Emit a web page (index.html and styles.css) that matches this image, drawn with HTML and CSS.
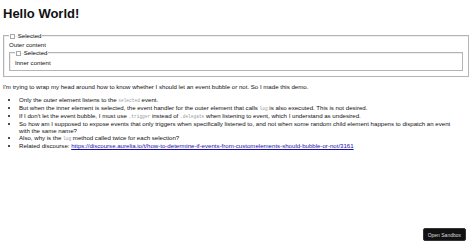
FILE: index.html
```html
<!DOCTYPE html>
<html lang="en">
<head>
    <meta charset="UTF-8">
    <meta name="viewport" content="width=device-width, initial-scale=1.0">
    <title>Hello World!</title>
    <link rel="stylesheet" href="styles.css">
</head>
<body>

    <h1>Hello World!</h1>

    <fieldset class="box">
        <legend><input type="checkbox"> Selected</legend>
        <div class="content">Outer content</div>
        <fieldset class="box inner">
            <legend><input type="checkbox"> Selected</legend>
            <div class="content">Inner content</div>
        </fieldset>
    </fieldset>

    <p>I'm trying to wrap my head around how to know whether I should let an event bubble or not. So I made this demo.</p>

    <ul>
        <li>Only the outer element listens to the <code>selected</code> event.</li>
        <li>But when the inner element is selected, the event handler for the outer element that calls <code>log</code> is also executed. This is not desired.</li>
        <li>If I don't let the event bubble, I must use <code>.trigger</code> instead of <code>.delegate</code> when listening to event, which I understand as undesired.</li>
        <li>So how am I supposed to expose events that only triggers when specifically listened to, and not when some random child element happens to dispatch an event with the same name?</li>
        <li>Also, why is the <code>log</code> method called twice for each selection?</li>
        <li>Related discourse: <a href="https://discourse.aurelia.io/t/how-to-determine-if-events-from-customelements-should-bubble-or-not/3161">https://discourse.aurelia.io/t/how-to-determine-if-events-from-customelements-should-bubble-or-not/3161</a></li>
    </ul>

    <button class="sandbox-btn">Open Sandbox</button>

</body>
</html>
```

FILE: styles.css
```css
body {
    margin: 0 3px;
    font-family: "Liberation Sans", Arial, sans-serif;
    font-size: 6.1px;
    line-height: 7px;
    color: #111;
    background-color: #fff;
}

h1 {
    font-size: 13px;
    line-height: 16px;
    margin: 6px 0 10px;
}

.box {
    margin: 0 2px 0 0;
    padding: 2px 5px 5px;
    border: 1px solid #b4b4b4;
    box-shadow: inset 1px 1px 0 #eee;
}

.box legend {
    padding: 0 1px;
    line-height: 7px;
}

.box legend input {
    appearance: none;
    width: 5px;
    height: 5px;
    margin: 0 1px 0 0;
    border: 1px solid #a8a8a8;
    background-color: #fff;
    vertical-align: -1px;
}

.content {
    line-height: 7px;
}

.inner {
    margin: 1px 0 0 0;
    padding: 3px 5px 4px;
}

p {
    margin: 6px 0;
}

ul {
    margin: 6px 12px 6px 0;
    padding-left: 16px;
}

code {
    font-family: "Liberation Mono", monospace;
    font-size: 4.5px;
    color: #999;
}

a {
    color: #1a0dab;
}

.sandbox-btn {
    position: fixed;
    right: 8px;
    bottom: 7px;
    height: 13px;
    padding: 0 4px;
    font-family: "Liberation Sans", Arial, sans-serif;
    font-size: 5px;
    color: #ddd;
    background-color: #111;
    border: 1px solid #333;
    border-radius: 2px;
}
```
